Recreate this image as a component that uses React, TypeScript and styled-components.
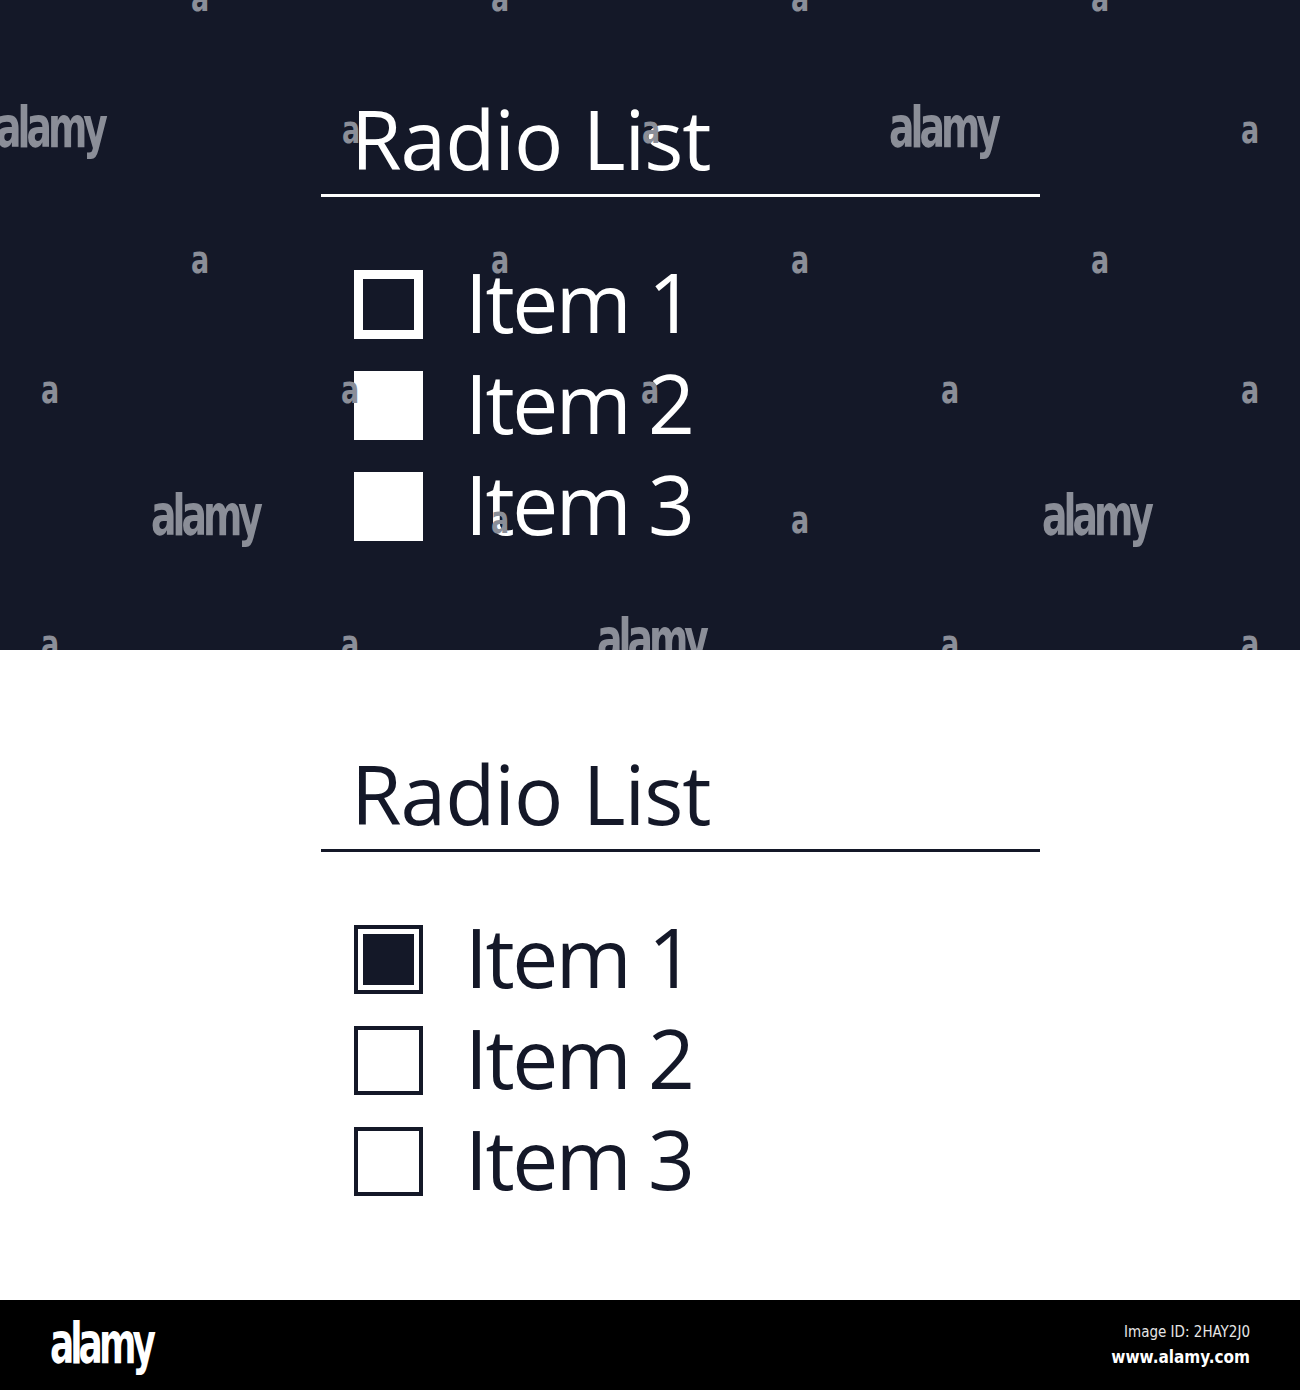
import React from "react";
import styled, { createGlobalStyle } from "styled-components";

const NAVY = "#141828";
const MARK = "#8b8e98";

const GlobalStyle = createGlobalStyle`
  html, body {
    margin: 0;
    padding: 0;
    background: #fff;
  }
  body {
    font-family: "Open Sans", "Noto Sans", sans-serif;
  }
`;

const Page = styled.div`
  width: 1300px;
  display: flex;
  flex-direction: column;
`;

const Panel = styled.section<{ $dark?: boolean }>`
  position: relative;
  height: 650px;
  overflow: hidden;
  box-sizing: border-box;
  padding: ${p => (p.$dark ? 82 : 87)}px 0 0 321px;
  background: ${p => (p.$dark ? NAVY : "#ffffff")};
  color: ${p => (p.$dark ? "#ffffff" : NAVY)};
`;

const Header = styled.div`
  width: 719px;
  border-bottom: 3px solid currentColor;
  padding-left: 30px;
  box-sizing: border-box;
`;

const Title = styled.h2`
  margin: 0;
  font-weight: 400;
  font-size: 82px;
  line-height: 112px;
  letter-spacing: -1px;
`;

const List = styled.ul`
  list-style: none;
  margin: 73px 0 0 33px;
  padding: 0;
  display: flex;
  flex-direction: column;
  gap: 32px;
`;

const Row = styled.li`
  display: flex;
  align-items: flex-start;
  gap: 42px;
  height: 69px;
`;

type BoxState = "empty" | "filled" | "checked";

const Box = styled.span<{ $state: BoxState; $thick: number }>`
  box-sizing: border-box;
  width: 69px;
  height: 69px;
  flex: none;
  border: ${p => p.$thick}px solid currentColor;
  background: ${p => (p.$state === "filled" ? "currentColor" : "transparent")};
  display: flex;
  align-items: center;
  justify-content: center;
`;

const Dot = styled.span`
  width: 51px;
  height: 51px;
  background: currentColor;
`;

const Label = styled.span`
  font-size: 82px;
  line-height: 69px;
  letter-spacing: -2.5px;
  margin-top: -3px;
`;

const Mark = styled.span<{ $x: number; $y: number; $big?: boolean }>`
  position: absolute;
  left: ${p => p.$x}px;
  top: ${p => p.$y}px;
  font-family: "DejaVu Sans Condensed", "DejaVu Sans", sans-serif;
  font-weight: 700;
  font-size: ${p => (p.$big ? 42 : 30)}px;
  letter-spacing: ${p => (p.$big ? -4 : 0)}px;
  line-height: 1;
  color: ${MARK};
  transform: scaleY(${p => (p.$big ? 1.35 : 1.25)});
  transform-origin: top left;
  pointer-events: none;
`;

const Footer = styled.footer`
  height: 90px;
  background: #000;
  color: #fff;
  display: flex;
  align-items: center;
  justify-content: space-between;
  padding: 0 50px;
`;

const Logo = styled.span`
  font-family: "DejaVu Sans Condensed", "DejaVu Sans", sans-serif;
  font-weight: 700;
  font-size: 40px;
  letter-spacing: -4px;
  transform: scaleY(1.4);
  margin-top: -4px;
`;

const Credit = styled.div`
  display: flex;
  flex-direction: column;
  align-items: flex-end;
  gap: 6px;
  font-family: "DejaVu Sans Condensed", "DejaVu Sans", sans-serif;
`;

const CreditLine = styled.span<{ $bold?: boolean }>`
  font-size: ${p => (p.$bold ? 17 : 15)}px;
  font-weight: ${p => (p.$bold ? 700 : 400)};
  color: ${p => (p.$bold ? "#fff" : "#e6e6e6")};
`;

// scattered stock watermark over the dark panel
const marks: { x: number; y: number; big?: boolean }[] = [
  { x: 191, y: -20 },
  { x: 491, y: -20 },
  { x: 791, y: -20 },
  { x: 1091, y: -20 },
  { x: -4, y: 100, big: true },
  { x: 889, y: 100, big: true },
  { x: 342, y: 112 },
  { x: 642, y: 112 },
  { x: 1241, y: 112 },
  { x: 191, y: 242 },
  { x: 491, y: 242 },
  { x: 791, y: 242 },
  { x: 1091, y: 242 },
  { x: 41, y: 372 },
  { x: 341, y: 372 },
  { x: 641, y: 372 },
  { x: 941, y: 372 },
  { x: 1241, y: 372 },
  { x: 151, y: 488, big: true },
  { x: 491, y: 502 },
  { x: 791, y: 502 },
  { x: 1042, y: 488, big: true },
  { x: 41, y: 626 },
  { x: 341, y: 626 },
  { x: 597, y: 612, big: true },
  { x: 941, y: 626 },
  { x: 1241, y: 626 },
];

const RadioList: React.FC<{ dark?: boolean; states: BoxState[]; thick: number }> = ({
  dark,
  states,
  thick,
}) => (
  <Panel $dark={dark}>
    <Header>
      <Title>Radio List</Title>
    </Header>
    <List>
      {states.map((s, i) => (
        <Row key={i}>
          <Box $state={s} $thick={thick}>
            {s === "checked" && <Dot />}
          </Box>
          <Label>Item {i + 1}</Label>
        </Row>
      ))}
    </List>
    {dark &&
      marks.map((m, i) => (
        <Mark key={i} $x={m.x} $y={m.y} $big={m.big}>
          {m.big ? "alamy" : "a"}
        </Mark>
      ))}
  </Panel>
);

export default function App() {
  return (
    <Page>
      <GlobalStyle />
      <RadioList dark states={["empty", "filled", "filled"]} thick={9} />
      <RadioList states={["checked", "empty", "empty"]} thick={4} />
      <Footer>
        <Logo>alamy</Logo>
        <Credit>
          <CreditLine>Image ID: 2HAY2J0</CreditLine>
          <CreditLine $bold>www.alamy.com</CreditLine>
        </Credit>
      </Footer>
    </Page>
  );
}
